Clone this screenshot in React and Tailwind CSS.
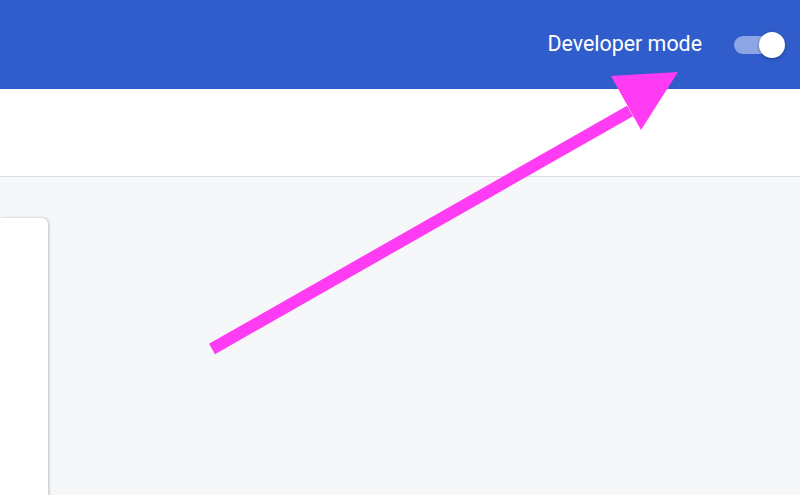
export default function App() {
  return (
    <div className="relative w-[800px] h-[495px] overflow-hidden bg-[#f6f7f9] font-['Roboto',sans-serif]">
      <header className="h-[89px] bg-[#305dcb] flex items-center justify-end pr-[15px]">
        <span className="text-white text-[21.4px] leading-none mr-[31px] mt-[-2px]">Developer mode</span>
        <div className="relative w-[52px] h-[26px] flex items-center">
          <div className="w-[42px] h-[18px] ml-[1px] rounded-full bg-[#8da5e4]"></div>
          <div className="absolute right-0 top-0 w-[26px] h-[26px] rounded-full bg-white shadow-[0_1px_3px_rgba(0,0,0,0.35)]"></div>
        </div>
      </header>
      <div className="h-[88px] bg-white border-b border-[#dcdde0]"></div>
      <div className="pt-[41px]">
        <div className="w-[48px] h-[300px] bg-white rounded-tr-[6px] shadow-[1px_0_3px_rgba(0,0,0,0.22)]"></div>
      </div>
      <svg className="absolute inset-0" width="800" height="495" viewBox="0 0 800 495">
        <line x1="212" y1="349" x2="630" y2="111" stroke="#ff3cf3" strokeWidth="12" />
        <polygon points="611,76 678,72 641,130" fill="#ff3cf3" />
      </svg>
    </div>
  );
}
